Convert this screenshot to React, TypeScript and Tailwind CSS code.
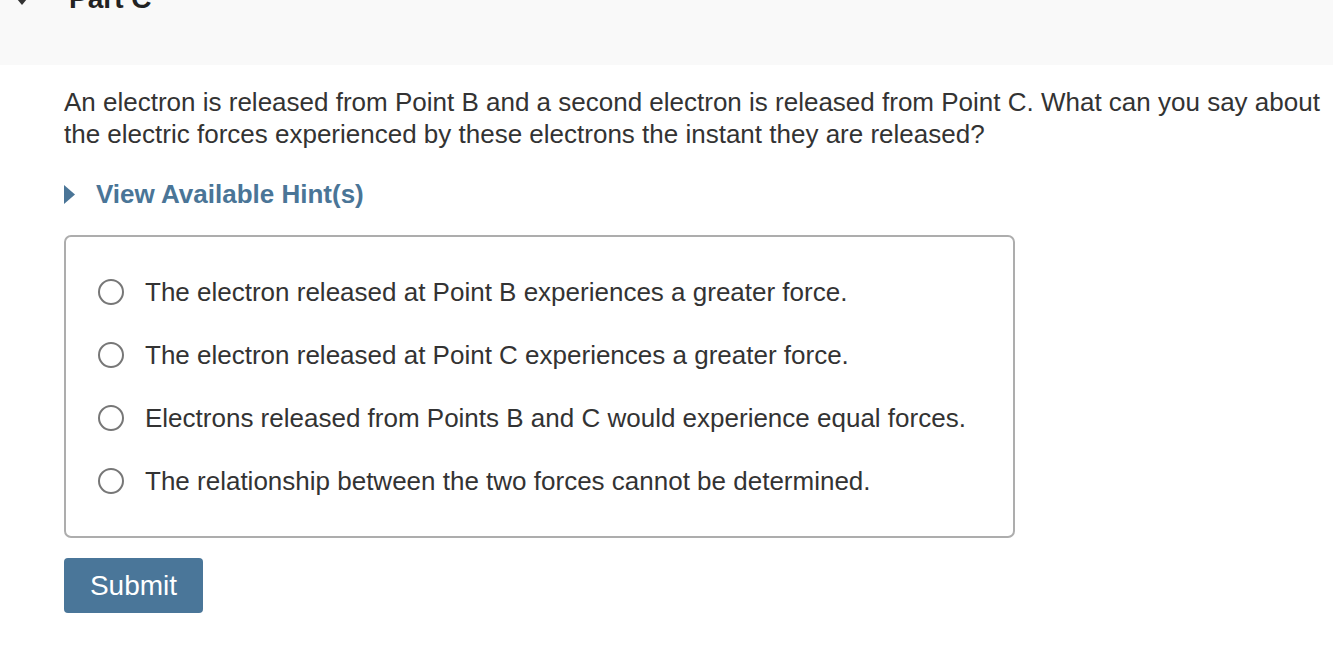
import React from 'react';

const options = [
  'The electron released at Point B experiences a greater force.',
  'The electron released at Point C experiences a greater force.',
  'Electrons released from Points B and C would experience equal forces.',
  'The relationship between the two forces cannot be determined.',
];

export default function App() {
  return (
    <div className="w-[1340px] h-[659px] overflow-hidden bg-white text-[#333] font-['Liberation_Sans',Arial,sans-serif]">
      <div className="w-[1333px] h-[65px] bg-[#f9f9f9] overflow-hidden">
        <div className="flex items-end gap-[42px] pl-[17px] -mt-[16px]">
          <svg width="10" height="8" viewBox="0 0 10 8" className="mb-[7px]">
            <path d="M0 0 L10 0 L5 6 Z" fill="#333" />
          </svg>
          <span className="text-[28px] font-bold leading-[30px] text-[#222]">Part C</span>
        </div>
      </div>

      <div className="pl-[64px] pt-[21px]">
        <p className="text-[26px] leading-[32px] w-[1272px]">
          An electron is released from Point B and a second electron is released from Point C. What can you say about the electric forces experienced by these electrons the instant they are released?
        </p>

        <button className="flex items-center mt-[29px] gap-[21px] text-[#4a7597]">
          <svg width="11" height="19" viewBox="0 0 11 19">
            <path d="M0 0 L11 9.5 L0 19 Z" fill="#4a7597" />
          </svg>
          <span className="text-[26px] font-bold leading-[30px]">View Available Hint(s)</span>
        </button>

        <div className="mt-[26px] w-[951px] h-[303px] border-2 border-[#adadad] rounded-[7px] pt-[43px] pl-[32px] flex flex-col gap-[39px]">
          {options.map((o) => (
            <label key={o} className="flex items-center gap-[21px] h-[24px]">
              <span className="w-[26px] h-[26px] rounded-full border-2 border-[#777] bg-white shrink-0" />
              <span className="text-[26px] leading-[24px] whitespace-nowrap">{o}</span>
            </label>
          ))}
        </div>

        <button className="mt-[20px] w-[139px] h-[55px] rounded-[4px] bg-[#4a7699] text-white text-[28px] leading-[55px]">
          Submit
        </button>
      </div>
    </div>
  );
}
